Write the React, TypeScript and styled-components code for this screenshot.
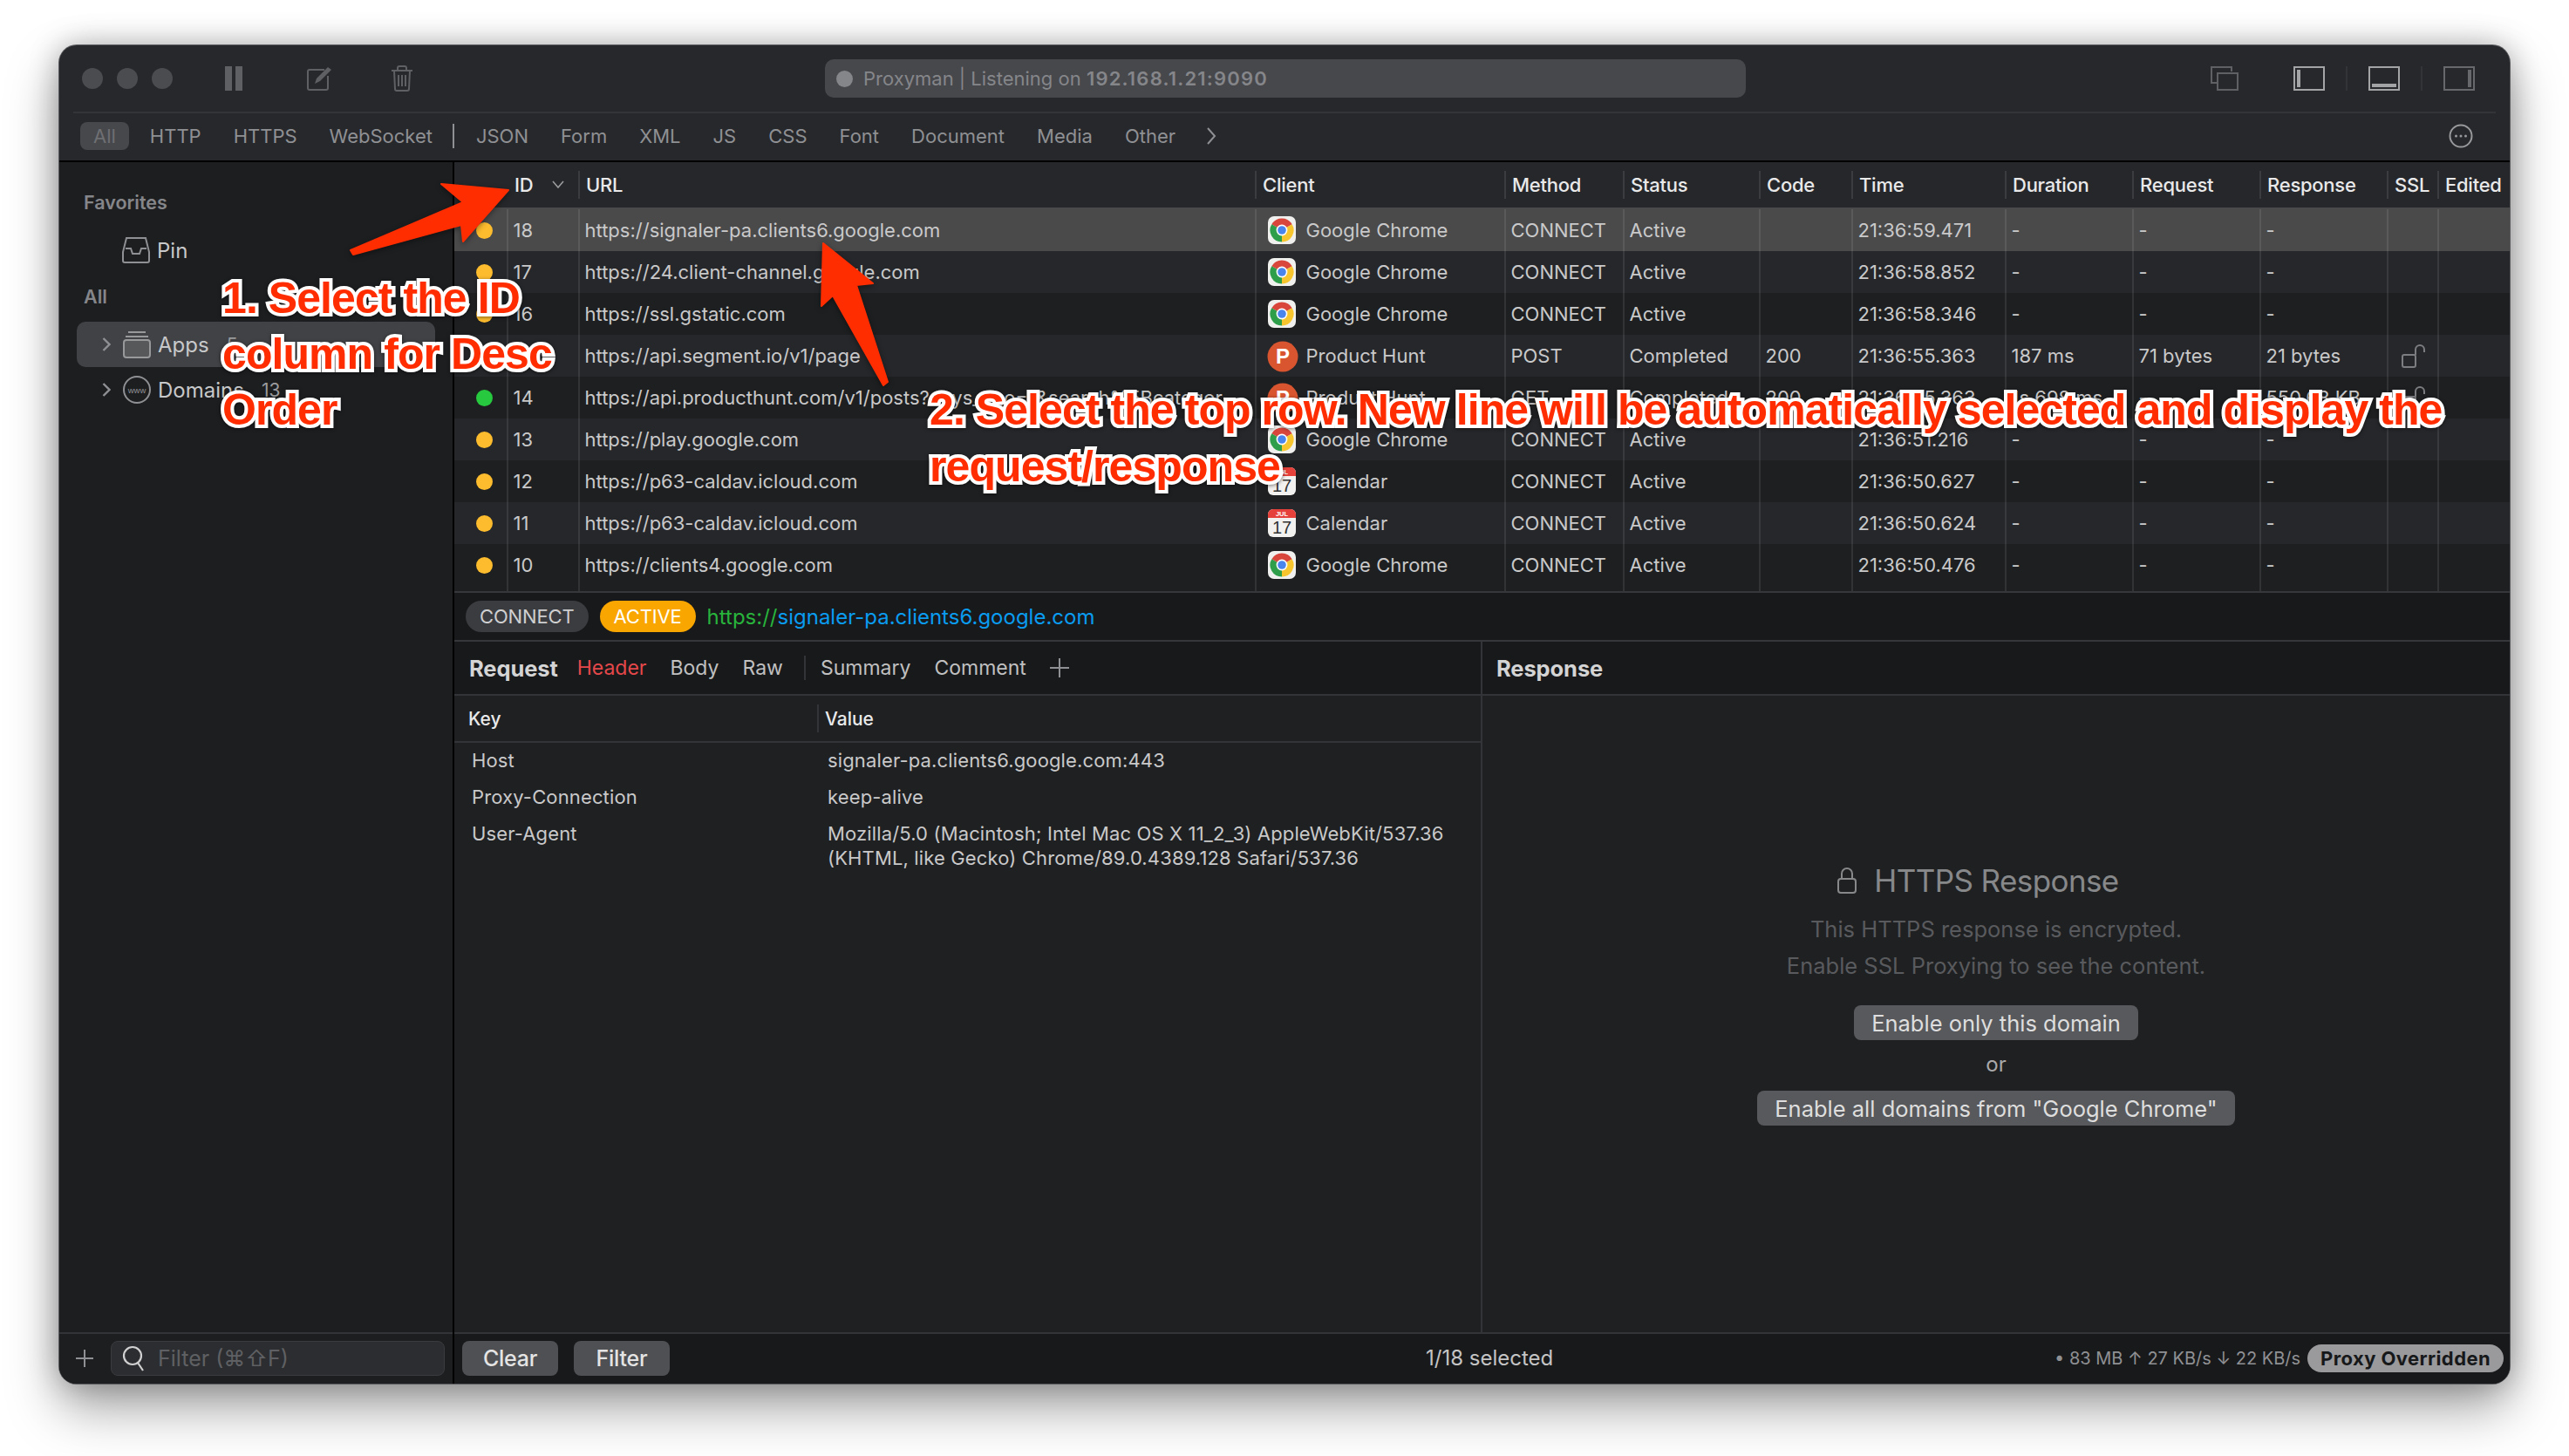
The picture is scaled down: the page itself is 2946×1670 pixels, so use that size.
import React from 'react';
import styled, { createGlobalStyle } from 'styled-components';

const GlobalStyle = createGlobalStyle`
  html, body {
    margin: 0;
    padding: 0;
    background: #ffffff;
  }
  * {
    box-sizing: border-box;
  }
`;

const FONT = `Inter, "Liberation Sans", sans-serif`;
const COLS = '60px 82px 776px 286px 136px 156px 106px 176px 146px 146px 146px 58px 1fr';

const Page = styled.div`
  position: relative;
  width: 2946px;
  height: 1670px;
  padding: 52px 0 0 68px;
  overflow: hidden;
  font-family: ${FONT};
`;

const Window = styled.div`
  width: 2810px;
  height: 1535px;
  border-radius: 20px;
  overflow: hidden;
  display: flex;
  flex-direction: column;
  background: #27282c;
  box-shadow: 0 0 0 1px #5a5b5e, 0 28px 60px rgba(0, 0, 0, 0.36), 0 0 34px rgba(0, 0, 0, 0.28);
`;

const TitleBar = styled.div`
  height: 76px;
  display: flex;
  align-items: center;
  padding: 0 40px 0 26px;
  flex: none;
`;

const Lights = styled.div`
  display: flex;
  gap: 16px;
`;

const Light = styled.span`
  width: 24px;
  height: 24px;
  border-radius: 50%;
  background: #4b4c50;
`;

const ToolIcon = styled.svg<{ $gap: number }>`
  margin-left: ${p => p.$gap}px;
  flex: none;
  display: block;
`;

const UrlBar = styled.div`
  margin-left: 472px;
  width: 1056px;
  height: 44px;
  border-radius: 10px;
  background: #47484c;
  display: flex;
  align-items: center;
  padding-left: 13px;
  gap: 12px;
  font-size: 22px;
  color: #85868a;
  b {
    font-weight: 600;
    letter-spacing: 1.2px;
  }
`;

const UrlDot = styled.span`
  width: 19px;
  height: 19px;
  border-radius: 50%;
  background: #85868a;
`;

const PanelTools = styled.div`
  margin-left: auto;
  display: flex;
  align-items: center;
`;

const ToolDivider = styled.span`
  width: 2px;
  height: 28px;
  background: #333438;
  margin: 0 24px;
`;

const BarRule = styled.div`
  height: 2px;
  margin: 0 16px;
  background: #333438;
  flex: none;
`;

const FilterBar = styled.div`
  height: 56px;
  flex: none;
  display: flex;
  align-items: center;
  padding: 0 42px 2px 24px;
  border-bottom: 2px solid #000;
`;

const FilterTab = styled.span<{ $active?: boolean }>`
  font-size: 22px;
  line-height: 32px;
  padding: 0 ${p => (p.$active ? '15px' : '18.5px')};
  margin-right: ${p => (p.$active ? '5.5px' : '0')};
  color: ${p => (p.$active ? '#6e6f73' : '#8f9093')};
  background: ${p => (p.$active ? '#47484c' : 'transparent')};
  border-radius: 8px;
`;

const FilterDivider = styled.span`
  width: 2px;
  height: 28px;
  background: #8f9093;
  margin: 0 6px 0 5px;
`;

const FilterEnd = styled.svg`
  margin-left: auto;
  display: block;
`;

const FilterMore = styled.svg`
  margin-left: 16px;
  display: block;
`;

const Body = styled.div`
  flex: 1;
  display: flex;
  min-height: 0;
`;

const Sidebar = styled.aside`
  width: 453px;
  flex: none;
  display: flex;
  flex-direction: column;
  background: #1d1e20;
  border-right: 2px solid #000;
`;

const SideList = styled.div`
  flex: 1;
  padding: 34px 20px 0 20px;
`;

const SideTitle = styled.div<{ $top?: number }>`
  font-size: 21.5px;
  font-weight: 600;
  line-height: 24px;
  color: #85868a;
  padding-left: 8px;
  margin-top: ${p => p.$top || 0}px;
`;

const SideRow = styled.div<{ $active?: boolean; $top?: number }>`
  height: 52px;
  margin-top: ${p => p.$top || 0}px;
  display: flex;
  align-items: center;
  border-radius: 10px;
  background: ${p => (p.$active ? '#414245' : 'transparent')};
  color: #c7c8c9;
  font-size: 24px;
  padding-left: 29px;
`;

const SideIcon = styled.svg<{ $indent?: number }>`
  display: block;
  flex: none;
  margin: 0 8px 0 ${p => p.$indent || 0}px;
`;

const Disclosure = styled.svg`
  display: block;
  flex: none;
  margin-right: 14px;
`;

const SideCount = styled.span`
  margin-left: 20px;
  font-size: 21px;
  color: #9a9b9d;
`;

const Footer = styled.div`
  height: 59px;
  padding-bottom: 2px;
  flex: none;
  display: flex;
  align-items: center;
  background: #18191b;
  border-top: 2px solid #333438;
`;

const SideFooter = styled(Footer)`
  background: #1d1e20;
  padding: 0 9px 2px 19px;
  gap: 20px;
`;

const FilterInput = styled.div`
  flex: 1;
  height: 40px;
  border-radius: 8px;
  background: #2c2d30;
  border: 1px solid #3a3b3e;
  display: flex;
  align-items: center;
  padding-left: 12px;
  gap: 15px;
  font-size: 25px;
  color: #5f6063;
`;

const Main = styled.main`
  flex: 1;
  min-width: 0;
  display: flex;
  flex-direction: column;
  background: #1f2022;
`;

const HeaderRow = styled.div`
  height: 52px;
  flex: none;
  display: grid;
  grid-template-columns: ${COLS};
  align-items: center;
  background: #26272a;
  color: #e9e9ea;
  font-size: 22px;
  font-weight: 500;
  letter-spacing: -0.25px;
`;

const HeaderCell = styled.div<{ $plain?: boolean }>`
  height: 32px;
  display: flex;
  align-items: center;
  justify-content: space-between;
  padding: 0 16px 0 7px;
  border-left: 2px solid ${p => (p.$plain ? 'transparent' : '#3b3c3f')};
  white-space: nowrap;
`;

const Row = styled.div<{ $selected?: boolean; $alt?: boolean }>`
  height: ${p => (p.$selected ? '50px' : '48px')};
  padding-top: ${p => (p.$selected ? '2px' : '0')};
  flex: none;
  display: grid;
  grid-template-columns: ${COLS};
  background: ${p => (p.$selected ? '#4a4a4b' : p.$alt ? '#26272a' : '#1e1f20')};
  color: #c9c9ca;
  font-size: 22px;
`;

const Cell = styled.div<{ $first?: boolean }>`
  display: flex;
  align-items: center;
  min-width: 0;
  overflow: hidden;
  white-space: nowrap;
  padding-left: 5.5px;
  gap: 11px;
  border-left: 2px solid ${p => (p.$first ? 'transparent' : 'rgba(255, 255, 255, 0.09)')};
`;

const RowFiller = styled.div`
  height: 6px;
  flex: none;
  display: grid;
  grid-template-columns: ${COLS};
  background: #1e1f20;
`;

const FillerCell = styled.div<{ $first?: boolean }>`
  border-left: 2px solid ${p => (p.$first ? 'transparent' : 'rgba(255, 255, 255, 0.09)')};
`;

const StatusDot = styled.span<{ $color: string }>`
  width: 19px;
  height: 19px;
  margin-left: 17px;
  border-radius: 50%;
  background: ${p => p.$color};
`;

const ClientIcon = styled.span`
  width: 34px;
  height: 34px;
  margin-left: 6px;
  flex: none;
  display: block;
  svg {
    display: block;
  }
`;

const LockWrap = styled.span`
  display: block;
  margin-left: 8px;
  svg {
    display: block;
  }
`;

const DetailBar = styled.div`
  height: 58px;
  flex: none;
  display: flex;
  align-items: center;
  padding-left: 13px;
  gap: 13px;
  background: #18191b;
  border-top: 2px solid #36373a;
  border-bottom: 2px solid #36373a;
  font-size: 22px;
`;

const Pill = styled.span<{ $orange?: boolean }>`
  height: 36px;
  padding: 0 16px;
  display: flex;
  align-items: center;
  border-radius: 18px;
  letter-spacing: -0.15px;
  background: ${p => (p.$orange ? '#f9a600' : '#3b3c40')};
  color: ${p => (p.$orange ? '#ffffff' : '#cfcfd0')};
`;

const DetailUrl = styled.span`
  font-size: 24px;
`;

const Scheme = styled.span`
  color: #28b43c;
`;

const Host = styled.span`
  color: #0a9cf0;
`;

const Split = styled.div`
  flex: 1;
  min-height: 0;
  display: flex;
`;

const RequestPane = styled.section`
  width: 1179px;
  flex: none;
  display: flex;
  flex-direction: column;
  border-right: 2px solid #333438;
`;

const ResponsePane = styled.section`
  flex: 1;
  display: flex;
  flex-direction: column;
`;

const PaneHeader = styled.div<{ $inset?: number }>`
  height: 62px;
  flex: none;
  display: flex;
  align-items: center;
  padding-left: ${p => p.$inset || 16}px;
  background: #18191b;
  border-bottom: 2px solid #333438;
  font-size: 23px;
  color: #c9c9ca;
`;

const PaneTitle = styled.b`
  font-size: 25.5px;
  font-weight: 700;
  letter-spacing: -0.1px;
  color: #d4d4d5;
  margin-right: 22px;
`;

const PaneTab = styled.span<{ $active?: boolean }>`
  margin-right: 27px;
  color: ${p => (p.$active ? '#e5484a' : '#c0c0c1')};
`;

const PaneDivider = styled.span`
  width: 2px;
  height: 28px;
  background: #333438;
  margin: 0 17px 0 -3px;
`;

const KeyHeader = styled.div`
  height: 54px;
  flex: none;
  display: grid;
  grid-template-columns: 416px 1fr;
  align-items: center;
  border-bottom: 2px solid #333438;
  font-size: 21px;
  font-weight: 500;
  color: #e9e9ea;
`;

const KeyTitle = styled.div`
  padding-left: 16px;
`;

const ValueTitle = styled.div`
  height: 32px;
  display: flex;
  align-items: center;
  padding-left: 7px;
  border-left: 2px solid #333438;
`;

const KeyRow = styled.div`
  display: grid;
  grid-template-columns: 408px 1fr;
  padding: 6px 16px 8px 20px;
  font-size: 22px;
  line-height: 28px;
  letter-spacing: 0.14px;
  color: #c9c9ca;
`;

const ResponseBody = styled.div`
  flex: 1;
  display: flex;
  flex-direction: column;
  align-items: center;
  padding-top: 188px;
`;

const LockTitle = styled.div`
  height: 48px;
  padding-right: 41px;
  display: flex;
  align-items: center;
  gap: 20px;
  font-size: 35px;
  letter-spacing: -0.6px;
  color: #87888a;
`;

const Hint = styled.div<{ $top: number }>`
  line-height: 42px;
  margin-top: ${p => p.$top}px;
  font-size: 25.5px;
  color: #595a5d;
`;

const ActionButton = styled.button<{ $top?: number }>`
  height: 40px;
  margin-top: ${p => p.$top || 0}px;
  padding: 0 20px;
  border: none;
  border-radius: 8px;
  background: #58595c;
  color: #dedede;
  font-family: ${FONT};
  font-size: 25.5px;
`;

const OrLabel = styled.div`
  height: 58px;
  line-height: 56px;
  font-size: 24px;
  color: #a9a9aa;
`;

const MainFooter = styled(Footer)`
  padding: 0 7px 2px 9px;
  gap: 18px;
`;

const FooterButton = styled.button`
  width: 110px;
  height: 40px;
  border: none;
  border-radius: 8px;
  background: #4f5053;
  color: #e4e4e4;
  font-family: ${FONT};
  font-size: 25px;
  font-weight: 500;
  letter-spacing: -0.25px;
`;

const Selection = styled.div`
  margin-left: 849px;
  font-size: 24px;
  color: #c4c4c5;
`;

const NetStats = styled.div`
  margin-left: auto;
  margin-right: -10px;
  font-size: 20px;
  color: #8f9093;
  white-space: nowrap;
`;

const ProxyBadge = styled.div`
  height: 32px;
  padding: 0 15px;
  display: flex;
  align-items: center;
  border-radius: 16px;
  background: #9a9a9c;
  color: #17181a;
  font-size: 22px;
  font-weight: 700;
  letter-spacing: 0.4px;
  white-space: nowrap;
`;

const Annotation = styled.div<{ $x: number; $y: number }>`
  position: absolute;
  left: ${p => p.$x}px;
  top: ${p => p.$y}px;
  font-family: "Liberation Sans", Arial, sans-serif;
  font-size: 50px;
  line-height: 64px;
  font-weight: 700;
  letter-spacing: -0.93px;
  white-space: nowrap;
  color: #ff2d00;
  -webkit-text-stroke: 8px #ffffff;
  paint-order: stroke fill;
  filter: drop-shadow(0 1px 2px rgba(0, 0, 0, 0.5));
`;

const ArrowLayer = styled.svg`
  position: absolute;
  left: 0;
  top: 0;
  pointer-events: none;
  filter: drop-shadow(0 2px 3px rgba(0, 0, 0, 0.4));
`;

const Chrome = () => (
  <svg width="34" height="34" viewBox="0 0 34 34">
    <rect x="1" y="1" width="32" height="32" rx="7" fill="#f0f0ee" />
    <path d="M17 17 L5.3 10.2 A13.5 13.5 0 0 1 28.7 10.2 Z" fill="#d9463c" />
    <path d="M17 17 L28.7 10.2 A13.5 13.5 0 0 1 17 30.5 Z" fill="#f7c52d" />
    <path d="M17 17 L17 30.5 A13.5 13.5 0 0 1 5.3 10.2 Z" fill="#2f9e4a" />
    <circle cx="17" cy="17" r="6.4" fill="#ffffff" />
    <circle cx="17" cy="17" r="4.8" fill="#4a85ee" />
  </svg>
);

const Hunt = () => (
  <svg width="36" height="36" viewBox="0 0 36 36">
    <circle cx="18" cy="18" r="17.5" fill="#d9552f" />
    <text x="18" y="26" textAnchor="middle" fontFamily="Liberation Sans" fontWeight="700" fontSize="24" fill="#fff">P</text>
  </svg>
);

const Calendar = () => (
  <svg width="34" height="34" viewBox="0 0 34 34">
    <rect x="1" y="1" width="32" height="32" rx="6" fill="#f2f1ef" />
    <path d="M1 11 V7 a6 6 0 0 1 6 -6 H27 a6 6 0 0 1 6 6 V11 Z" fill="#e5403a" />
    <text x="17" y="9" textAnchor="middle" fontFamily="Liberation Sans" fontWeight="700" fontSize="7.5" fill="#fff">JUL</text>
    <text x="17" y="29" textAnchor="middle" fontFamily="Liberation Sans" fontSize="20" fill="#333">17</text>
  </svg>
);

const OpenLock = () => (
  <LockWrap>
    <svg width="28" height="28" viewBox="0 0 28 28" fill="none" stroke="#7c7d80" strokeWidth="2">
      <rect x="2" y="13" width="15" height="14" rx="2" />
      <path d="M17 13 V7 a5 5 0 0 1 10 0 V10" />
    </svg>
  </LockWrap>
);

const clients: Record<string, () => React.ReactElement> = {
  'Google Chrome': Chrome,
  'Product Hunt': Hunt,
  Calendar
};

interface IRow {
  id: number;
  url: string;
  client: string;
  method: string;
  status: string;
  code: string;
  time: string;
  duration: string;
  request: string;
  response: string;
  lock?: boolean;
  green?: boolean;
}

const tunnel = (id: number, url: string, client: string, time: string): IRow => ({
  id,
  url,
  client,
  method: 'CONNECT',
  status: 'Active',
  code: '',
  time,
  duration: '-',
  request: '-',
  response: '-'
});

const rows: IRow[] = [
  tunnel(18, 'https://signaler-pa.clients6.google.com', 'Google Chrome', '21:36:59.471'),
  tunnel(17, 'https://24.client-channel.google.com', 'Google Chrome', '21:36:58.852'),
  tunnel(16, 'https://ssl.gstatic.com', 'Google Chrome', '21:36:58.346'),
  {
    id: 15,
    url: 'https://api.segment.io/v1/page',
    client: 'Product Hunt',
    method: 'POST',
    status: 'Completed',
    code: '200',
    time: '21:36:55.363',
    duration: '187 ms',
    request: '71 bytes',
    response: '21 bytes',
    lock: true,
    green: true
  },
  {
    id: 14,
    url: 'https://api.producthunt.com/v1/posts?days_ago=1&search%5Bcategor',
    client: 'Product Hunt',
    method: 'GET',
    status: 'Completed',
    code: '200',
    time: '21:36:55.363',
    duration: '1s 698 ms',
    request: '-',
    response: '550.68 KB',
    lock: true,
    green: true
  },
  tunnel(13, 'https://play.google.com', 'Google Chrome', '21:36:51.216'),
  tunnel(12, 'https://p63-caldav.icloud.com', 'Calendar', '21:36:50.627'),
  tunnel(11, 'https://p63-caldav.icloud.com', 'Calendar', '21:36:50.624'),
  tunnel(10, 'https://clients4.google.com', 'Google Chrome', '21:36:50.476')
];

const filters = ['JSON', 'Form', 'XML', 'JS', 'CSS', 'Font', 'Document', 'Media', 'Other'];
const columns = ['Client', 'Method', 'Status', 'Code', 'Time', 'Duration', 'Request', 'Response', 'SSL', 'Edited'];

const TableRow: React.FC<{ row: IRow; index: number }> = ({ row, index }) => {
  const Icon = clients[row.client];
  return (
    <Row $selected={index === 0} $alt={index % 2 === 1}>
      <Cell $first>
        <StatusDot $color={row.green ? '#27c93f' : '#fdbc2e'} />
      </Cell>
      <Cell>{row.id}</Cell>
      <Cell>{row.url}</Cell>
      <Cell>
        <ClientIcon>
          <Icon />
        </ClientIcon>
        {row.client}
      </Cell>
      <Cell>{row.method}</Cell>
      <Cell>{row.status}</Cell>
      <Cell>{row.code}</Cell>
      <Cell>{row.time}</Cell>
      <Cell>{row.duration}</Cell>
      <Cell>{row.request}</Cell>
      <Cell>{row.response}</Cell>
      <Cell>{row.lock && <OpenLock />}</Cell>
      <Cell />
    </Row>
  );
};

const App: React.FC = () => (
  <Page>
    <GlobalStyle />
    <Window>
      <TitleBar>
        <Lights>
          <Light />
          <Light />
          <Light />
        </Lights>
        <ToolIcon $gap={60} width="20" height="28" viewBox="0 0 20 28" fill="#5f6064">
          <rect x="0" y="0" width="8" height="28" />
          <rect x="12" y="0" width="8" height="28" />
        </ToolIcon>
        <ToolIcon $gap={74} width="30" height="30" viewBox="0 0 30 30" fill="none" stroke="#5f6064" strokeWidth="2">
          <path d="M20 5 H3 a2 2 0 0 0 -2 2 V26 a2 2 0 0 0 2 2 H22 a2 2 0 0 0 2 -2 V12" />
          <path d="M9 21 L11 15 L24 2 L28 5 L15 18 Z" fill="#5f6064" stroke="none" />
        </ToolIcon>
        <ToolIcon $gap={66} width="26" height="30" viewBox="0 0 26 30" fill="none" stroke="#5f6064" strokeWidth="2">
          <path d="M1 6 H25 M8 6 V3 a2 2 0 0 1 2 -2 H16 a2 2 0 0 1 2 2 V6" />
          <path d="M4 6 L5 27 a2 2 0 0 0 2 2 H19 a2 2 0 0 0 2 -2 L22 6" />
          <path d="M9 11 V24 M13 11 V24 M17 11 V24" />
        </ToolIcon>
        <UrlBar>
          <UrlDot />
          <span>
            Proxyman | Listening on <b>192.168.1.21:9090</b>
          </span>
        </UrlBar>
        <PanelTools>
          <svg width="34" height="30" viewBox="0 0 34 30" fill="none" stroke="#5f6064" strokeWidth="2">
            <path d="M25 7 V2 H2 V20 H9" />
            <rect x="9" y="9" width="23" height="19" />
          </svg>
          <ToolIcon $gap={62} width="36" height="28" viewBox="0 0 36 28" fill="none" stroke="#a3a4a6" strokeWidth="2">
            <rect x="1" y="1" width="34" height="26" />
            <rect x="4" y="4" width="4" height="20" fill="#a3a4a6" stroke="none" />
          </ToolIcon>
          <ToolDivider />
          <svg width="36" height="28" viewBox="0 0 36 28" fill="none" stroke="#a3a4a6" strokeWidth="2">
            <rect x="1" y="1" width="34" height="26" />
            <rect x="4" y="20" width="28" height="4" fill="#a3a4a6" stroke="none" />
          </svg>
          <ToolDivider />
          <svg width="36" height="28" viewBox="0 0 36 28" fill="none" stroke="#67686b" strokeWidth="2">
            <rect x="1" y="1" width="34" height="26" />
            <rect x="28" y="4" width="4" height="20" fill="#67686b" stroke="none" />
          </svg>
        </PanelTools>
      </TitleBar>
      <BarRule />
      <FilterBar>
        <FilterTab $active>All</FilterTab>
        <FilterTab>HTTP</FilterTab>
        <FilterTab>HTTPS</FilterTab>
        <FilterTab>WebSocket</FilterTab>
        <FilterDivider />
        {filters.map(name => (
          <FilterTab key={name}>{name}</FilterTab>
        ))}
        <FilterMore width="12" height="22" viewBox="0 0 12 22" fill="none" stroke="#8f9093" strokeWidth="2">
          <path d="M2 2 L10 11 L2 20" />
        </FilterMore>
        <FilterEnd width="28" height="28" viewBox="0 0 28 28" fill="none" stroke="#98999b" strokeWidth="2">
          <circle cx="14" cy="14" r="12.5" />
          <circle cx="8.5" cy="14" r="1.5" fill="#98999b" stroke="none" />
          <circle cx="14" cy="14" r="1.5" fill="#98999b" stroke="none" />
          <circle cx="19.5" cy="14" r="1.5" fill="#98999b" stroke="none" />
        </FilterEnd>
      </FilterBar>
      <Body>
        <Sidebar>
          <SideList>
            <SideTitle>Favorites</SideTitle>
            <SideRow $top={17}>
              <SideIcon $indent={23} width="32" height="30" viewBox="0 0 32 30" fill="none" stroke="#8f9093" strokeWidth="2">
                <path d="M5 1 H27 L31 17 V27 a2 2 0 0 1 -2 2 H3 a2 2 0 0 1 -2 -2 V17 Z" />
                <path d="M4 13 H10 L12 19 H20 L22 13 H28" />
              </SideIcon>
              Pin
            </SideRow>
            <SideTitle $top={15}>All</SideTitle>
            <SideRow $active $top={17}>
              <Disclosure width="10" height="18" viewBox="0 0 10 18" fill="none" stroke="#8f9093" strokeWidth="2.4">
                <path d="M1.5 2 L8.5 9 L1.5 16" />
              </Disclosure>
              <SideIcon width="32" height="32" viewBox="0 0 32 32" fill="none" stroke="#98999b" strokeWidth="2">
                <path d="M6 2 H26 M3 7 H29" />
                <rect x="1" y="11" width="30" height="20" rx="3" fill="#57585a" />
              </SideIcon>
              Apps
              <SideCount>5</SideCount>
            </SideRow>
            <SideRow>
              <Disclosure width="10" height="18" viewBox="0 0 10 18" fill="none" stroke="#8f9093" strokeWidth="2.4">
                <path d="M1.5 2 L8.5 9 L1.5 16" />
              </Disclosure>
              <SideIcon width="32" height="32" viewBox="0 0 32 32" fill="none" stroke="#8f9093" strokeWidth="2">
                <circle cx="16" cy="16" r="15" />
                <text x="16" y="19.5" textAnchor="middle" fontFamily="Liberation Sans" fontSize="9.5" fill="#8f9093" stroke="none">
                  www
                </text>
              </SideIcon>
              Domains
              <SideCount>13</SideCount>
            </SideRow>
          </SideList>
          <SideFooter>
            <svg width="20" height="20" viewBox="0 0 20 20" stroke="#8f9093" strokeWidth="2">
              <path d="M10 0 V20 M0 10 H20" />
            </svg>
            <FilterInput>
              <svg width="26" height="30" viewBox="0 0 26 30" fill="none" stroke="#d0d0d1" strokeWidth="2.2">
                <circle cx="12" cy="12" r="10" />
                <path d="M18 20 L24 29" />
              </svg>
              Filter (⌘⇧F)
            </FilterInput>
          </SideFooter>
        </Sidebar>
        <Main>
          <HeaderRow>
            <HeaderCell $plain />
            <HeaderCell $plain>
              ID
              <svg width="14" height="10" viewBox="0 0 14 10" fill="none" stroke="#9a9b9d" strokeWidth="1.6">
                <path d="M1 1 L7 8 L13 1" />
              </svg>
            </HeaderCell>
            <HeaderCell>URL</HeaderCell>
            {columns.map(name => (
              <HeaderCell key={name}>{name}</HeaderCell>
            ))}
          </HeaderRow>
          {rows.map((row, index) => (
            <TableRow key={row.id} row={row} index={index} />
          ))}
          <RowFiller>
            <FillerCell $first />
            {Array.from({ length: 12 }, (_, i) => (
              <FillerCell key={i} />
            ))}
          </RowFiller>
          <DetailBar>
            <Pill>CONNECT</Pill>
            <Pill $orange>ACTIVE</Pill>
            <DetailUrl>
              <Scheme>https://</Scheme>
              <Host>signaler-pa.clients6.google.com</Host>
            </DetailUrl>
          </DetailBar>
          <Split>
            <RequestPane>
              <PaneHeader $inset={17}>
                <PaneTitle>Request</PaneTitle>
                <PaneTab $active>Header</PaneTab>
                <PaneTab>Body</PaneTab>
                <PaneTab>Raw</PaneTab>
                <PaneDivider />
                <PaneTab>Summary</PaneTab>
                <PaneTab>Comment</PaneTab>
                <svg width="22" height="22" viewBox="0 0 22 22" stroke="#8f9093" strokeWidth="2">
                  <path d="M11 0 V22 M0 11 H22" />
                </svg>
              </PaneHeader>
              <KeyHeader>
                <KeyTitle>Key</KeyTitle>
                <ValueTitle>Value</ValueTitle>
              </KeyHeader>
              <KeyRow>
                <div>Host</div>
                <div>signaler-pa.clients6.google.com:443</div>
              </KeyRow>
              <KeyRow>
                <div>Proxy-Connection</div>
                <div>keep-alive</div>
              </KeyRow>
              <KeyRow>
                <div>User-Agent</div>
                <div>
                  Mozilla/5.0 (Macintosh; Intel Mac OS X 11_2_3) AppleWebKit/537.36
                  <br />
                  (KHTML, like Gecko) Chrome/89.0.4389.128 Safari/537.36
                </div>
              </KeyRow>
            </RequestPane>
            <ResponsePane>
              <PaneHeader>
                <PaneTitle>Response</PaneTitle>
              </PaneHeader>
              <ResponseBody>
                <LockTitle>
                  <svg width="22" height="30" viewBox="0 0 22 30" fill="none" stroke="#87888a" strokeWidth="2">
                    <rect x="1" y="13" width="20" height="16" rx="3" />
                    <path d="M5 13 V7 a6 6 0 0 1 12 0 V13" />
                  </svg>
                  HTTPS Response
                </LockTitle>
                <Hint $top={11}>This HTTPS response is encrypted.</Hint>
                <Hint $top={0}>Enable SSL Proxying to see the content.</Hint>
                <ActionButton $top={24}>Enable only this domain</ActionButton>
                <OrLabel>or</OrLabel>
                <ActionButton>Enable all domains from "Google Chrome"</ActionButton>
              </ResponseBody>
            </ResponsePane>
          </Split>
          <MainFooter>
            <FooterButton>Clear</FooterButton>
            <FooterButton>Filter</FooterButton>
            <Selection>1/18 selected</Selection>
            <NetStats>• 83 MB ↑ 27 KB/s ↓ 22 KB/s</NetStats>
            <ProxyBadge>Proxy Overridden</ProxyBadge>
          </MainFooter>
        </Main>
      </Body>
    </Window>
    <ArrowLayer width="2946" height="1670" viewBox="0 0 2946 1670">
      <path d="M583 218 L506 211 L531 232 L402 287 L405 292 L529 258 L531 277 Z" fill="#ff2d00" stroke="#ff2d00" strokeWidth="2" strokeLinejoin="round" />
      <path d="M944 279 L1001 325 L982 327 L1018 438 L1013 442 L955 339 L942 351 Z" fill="#ff2d00" stroke="#ff2d00" strokeWidth="2" strokeLinejoin="round" />
    </ArrowLayer>
    <Annotation $x={255} $y={310}>1. Select the ID</Annotation>
    <Annotation $x={255} $y={374}>column for Desc</Annotation>
    <Annotation $x={255} $y={438}>Order</Annotation>
    <Annotation $x={1066} $y={438}>2. Select the top row. New line will be automatically selected and display the</Annotation>
    <Annotation $x={1066} $y={503}>request/response</Annotation>
  </Page>
);

export default App;
